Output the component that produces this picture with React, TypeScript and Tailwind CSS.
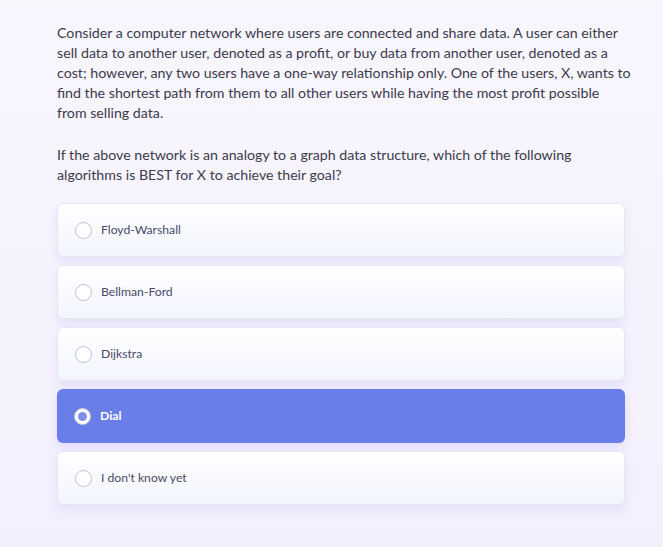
import React, { useState } from "react";

const OPTIONS = [
  "Floyd-Warshall",
  "Bellman-Ford",
  "Dijkstra",
  "Dial",
  "I don't know yet",
];

export default function App() {
  const [selected, setSelected] = useState<number>(3);

  return (
    <div
      className="w-[663px] h-[547px] overflow-hidden bg-gradient-to-b from-[#f8f6fd] to-[#f4effd]"
      style={{ fontFamily: "Lato, 'Noto Sans', sans-serif" }}
    >
      <div className="ml-[57px] w-[590px] pt-[23px]">
        <p className="text-[14.2px] leading-[20px] text-[#3b3b4b]">
          Consider a computer network where users are connected and share data.
          A user can either
          <br />
          sell data to another user, denoted as a profit, or buy data from
          another user, denoted as a
          <br />
          cost; however, any two users have a one-way relationship only. One of
          the users, X, wants to
          <br />
          find the shortest path from them to all other users while having the
          most profit possible
          <br />
          from selling data.
        </p>
        <p className="mt-[22px] text-[14.2px] leading-[20px] text-[#3b3b4b]">
          If the above network is an analogy to a graph data structure, which of
          the following
          <br />
          algorithms is BEST for X to achieve their goal?
        </p>
      </div>

      <div className="mt-[18px] ml-[57px] w-[568px] flex flex-col gap-[8px]">
        {OPTIONS.map((opt, i) => {
          const active = selected === i;
          return (
            <button
              key={opt}
              onClick={() => setSelected(i)}
              className={`h-[54px] flex items-center pl-[17px] rounded-[6px] text-left ${
                active
                  ? "bg-[#6a7eea] shadow-[0_4px_10px_rgba(150,140,240,0.22)]"
                  : "bg-gradient-to-b from-white to-[#f3f5fe] border border-[#e6e6f0] shadow-[0_5px_10px_rgba(170,155,245,0.2)]"
              }`}
            >
              {active ? (
                <span className="w-[17px] h-[17px] rounded-full bg-white border border-[#c9c9d6] flex items-center justify-center">
                  <span className="w-[9px] h-[9px] rounded-full bg-[#7f90ec]" />
                </span>
              ) : (
                <span className="w-[17px] h-[17px] rounded-full bg-white border-[1.5px] border-[#b9c4cc]" />
              )}
              <span
                className={`ml-[9px] text-[12.2px] ${
                  active ? "text-white font-bold" : "text-[#4a4a68]"
                }`}
              >
                {opt}
              </span>
            </button>
          );
        })}
      </div>
    </div>
  );
}
